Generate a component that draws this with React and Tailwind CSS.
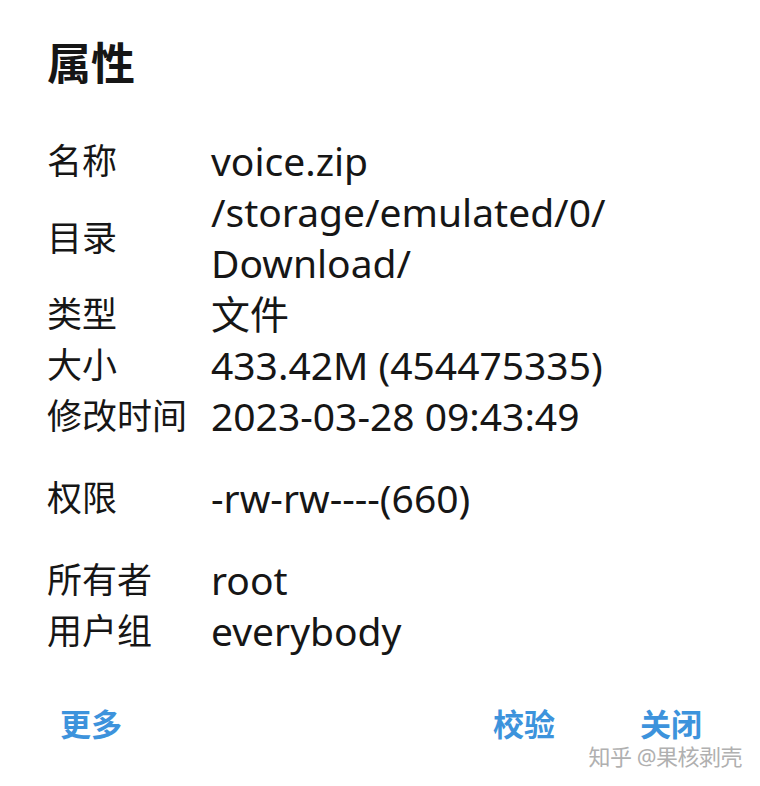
import React from 'react';

const CJK = { fontFamily: '"Noto Sans", "Noto Sans CJK SC", sans-serif' };

const rows = [
    { label: '名称', value: ['voice.zip'] },
    { label: '目录', value: ['/storage/emulated/0/', 'Download/'] },
    { label: '类型', value: ['文件'] },
    { label: '大小', value: ['433.42M (454475335)'] },
    { label: '修改时间', value: ['2023-03-28 09:43:49'], gapAfter: true },
    { label: '权限', value: ['-rw-rw----(660)'], gapAfter: true },
    { label: '所有者', value: ['root'] },
    { label: '用户组', value: ['everybody'] }
];

const InfoRow = ({ label, value, gapAfter }) => (
    <div className={`flex items-center ${gapAfter ? 'mb-[31px]' : ''}`}>
        <div className="w-[164px] shrink-0 text-[35px] leading-[51px] text-[#161616]">{label}</div>
        <div className="text-[39px] leading-[51px] text-[#161616]">
            {value.map((line) => (
                <div key={line}>{line}</div>
            ))}
        </div>
    </div>
);

const App = () => {
    return (
        <div className="relative w-[760px] h-[786px] bg-white overflow-hidden" style={CJK}>
            <div className="px-[47px] pt-[35px]">
                <h1 className="text-[44px] leading-[56px] font-bold text-[#161616]">属性</h1>

                <div className="mt-[44px]">
                    {rows.map((row) => (
                        <InfoRow key={row.label} {...row} />
                    ))}
                </div>
            </div>

            <div className="flex items-center mt-[44px] pl-[60px] pr-[58px] h-[48px] text-[31px] font-bold text-[#3d93dc]">
                <button type="button" className="leading-none">更多</button>
                <div className="flex-1" />
                <button type="button" className="leading-none">校验</button>
                <button type="button" className="leading-none ml-[85px]">关闭</button>
            </div>

            <div className="absolute right-[18px] top-[747px] text-[22px] leading-[18px] text-[#b0b0b0] tracking-[-0.5px]">
                知乎 @果核剥壳
            </div>
        </div>
    );
};

export default App;
